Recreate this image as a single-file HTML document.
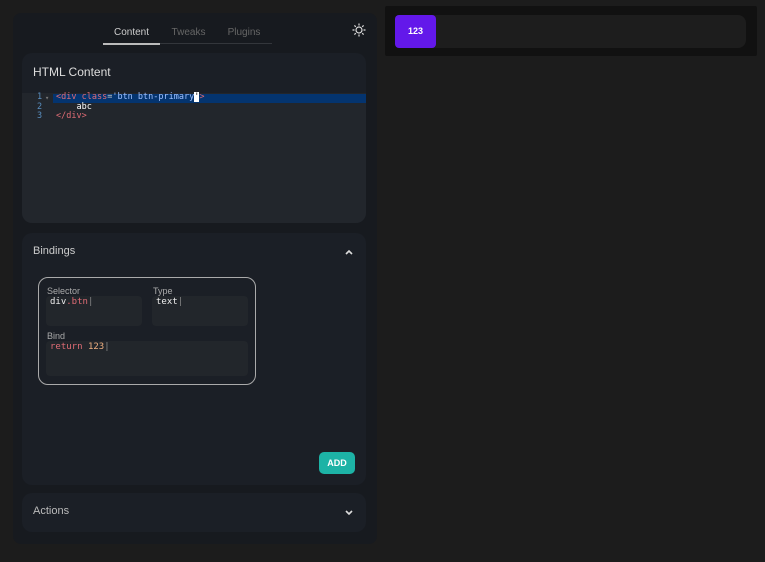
<!DOCTYPE html>
<html><head><style>
*{box-sizing:border-box;margin:0;padding:0}
body{width:765px;height:562px;background:#1c1c1c;font-family:"Liberation Sans",sans-serif;position:relative;overflow:hidden;color:#ddd}
.abs{position:absolute}
.panel{left:13px;top:13px;width:364px;height:531px;background:#171a1f;border-radius:8px}
.card{background:#1b1f26;border-radius:10px;left:22px;width:344px}
.mono{font-family:"DejaVu Sans Mono",monospace;font-size:8.5px}
.lbl{font-size:9px;color:#aaa}
.inp{background:#22262b;border-radius:4px}
</style></head><body>
<div class="abs panel"></div>
<div class="abs" style="left:103px;top:27px;width:57px;text-align:center;font-size:10px;color:#ccc">Content</div>
<div class="abs" style="left:160px;top:27px;width:57px;text-align:center;font-size:10px;color:#666">Tweaks</div>
<div class="abs" style="left:216px;top:27px;width:56px;text-align:center;font-size:10px;color:#666">Plugins</div>
<div class="abs" style="left:103px;top:43px;width:169px;height:1px;background:#33363b"></div>
<div class="abs" style="left:103px;top:43px;width:57px;height:2px;background:#bbb"></div>
<svg class="abs" style="left:352px;top:23px" width="14" height="14" viewBox="0 0 14 14" stroke="#ddd" fill="none" stroke-width="1.2"><circle cx="7" cy="7" r="3"/><path d="M7 0.5v2M7 11.5v2M0.5 7h2M11.5 7h2M2.4 2.4l1.4 1.4M10.2 10.2l1.4 1.4M2.4 11.6l1.4-1.4M10.2 3.8l1.4-1.4"/></svg>
<div class="abs card" style="top:53px;height:170px;overflow:hidden">
 <div class="abs" style="left:11px;top:12px;font-size:12px;color:#ddd">HTML Content</div>
 <div class="abs" style="left:0;top:40px;width:344px;height:130px;background:#22262c"></div>
 <div class="abs" style="left:31px;top:41px;width:313px;height:9px;background:#04346f"></div>
 <div class="abs mono" style="left:15px;top:40px;color:#5a8fc0;line-height:9.5px">1<br>2<br>3</div>
 <div class="abs mono" style="left:23px;top:41px;color:#777;font-size:7px">▾</div>
 <div class="abs mono" style="left:34px;top:40px;line-height:9.5px;white-space:pre"><span style="color:#e06c75">&lt;div</span> <span style="color:#e06c75">class</span><span style="color:#ccc">=</span><span style="color:#9ec0ff">'btn btn-primary</span><span style="background:#fff;color:#000">'</span><span style="color:#e06c75">&gt;</span>
<span style="color:#fff">    abc</span>
<span style="color:#e06c75">&lt;/div&gt;</span></div>
</div>
<div class="abs card" style="top:233px;height:252px">
 <div class="abs" style="left:11px;top:12px;font-size:11px;color:#ccc">Bindings</div>
 <svg class="abs" style="left:323px;top:16px" width="8" height="6" viewBox="0 0 8 6"><path d="M1 5l3-3 3 3" stroke="#ddd" stroke-width="1.6" fill="none"/></svg>
 <div class="abs" style="left:16px;top:44px;width:218px;height:108px;border:1px solid #aaa;border-radius:10px"></div>
 <div class="abs lbl" style="left:25px;top:53px">Selector</div>
 <div class="abs inp" style="left:24px;top:63px;width:96px;height:30px"></div>
 <div class="abs mono" style="left:28px;top:64px;color:#eee;font-size:9px">div<span style="color:#e06c75">.btn</span><span style="color:#888">|</span></div>
 <div class="abs lbl" style="left:131px;top:53px">Type</div>
 <div class="abs inp" style="left:130px;top:63px;width:96px;height:30px"></div>
 <div class="abs mono" style="left:134px;top:64px;color:#eee;font-size:9px">text<span style="color:#888">|</span></div>
 <div class="abs lbl" style="left:25px;top:98px">Bind</div>
 <div class="abs inp" style="left:24px;top:108px;width:202px;height:35px"></div>
 <div class="abs mono" style="left:28px;top:109px;font-size:9px"><span style="color:#e06c75">return</span> <span style="color:#f0b080">123</span><span style="color:#888">|</span></div>
 <div class="abs" style="left:297px;top:219px;width:36px;height:22px;background:#1db3a6;border-radius:5px;color:#fff;font-size:9px;font-weight:bold;text-align:center;line-height:22px">ADD</div>
</div>
<div class="abs card" style="top:493px;height:39px">
 <div class="abs" style="left:11px;top:12px;font-size:11px;color:#bbb">Actions</div>
 <svg class="abs" style="left:323px;top:17px" width="8" height="6" viewBox="0 0 8 6"><path d="M1 1l3 3 3-3" stroke="#ddd" stroke-width="1.6" fill="none"/></svg>
</div>
<div class="abs" style="left:385px;top:6px;width:372px;height:50px;background:#111;border-radius:2px"></div>
<div class="abs" style="left:395px;top:15px;width:351px;height:33px;background:#1d1d1d;border-radius:8px"></div>
<div class="abs" style="left:395px;top:15px;width:41px;height:33px;background:#6318ea;border-radius:4px;color:#fff;font-size:9px;font-weight:bold;text-align:center;line-height:33px">123</div>
</body></html>
